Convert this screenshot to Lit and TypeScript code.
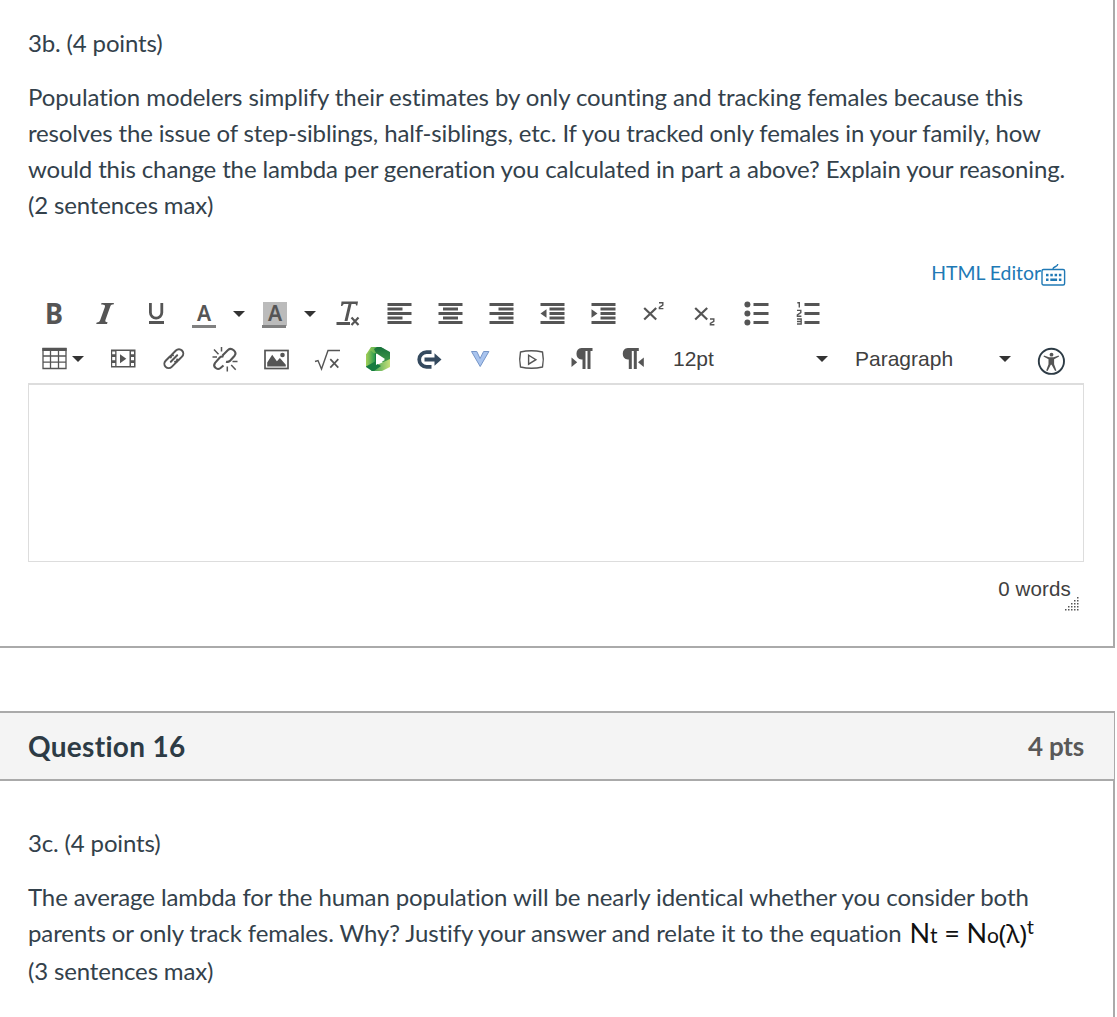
import { LitElement, html, svg, css } from "lit";
import { customElement, property } from "lit/decorators.js";

const caret = (x: number, y: number) =>
  svg`<path d="M${x} ${y}h12l-6 6z" fill="#333"/>`;

const bars = (rows: Array<[number, number]>) =>
  rows.map(([x, w], i) => svg`<rect x=${x} y=${7 + i * 4.5} width=${w} height="3"/>`);

const cross = (x: number, y: number, w: number, h: number, s: number) =>
  svg`<path d="M${x} ${y}l${w} ${h}M${x + w} ${y}l${-w} ${h}" fill="none" stroke="#555" stroke-width=${s}/>`;

const tinyTwo = (x: number, y: number) =>
  svg`<path d="M${x} ${y}h3.800v2.300l-3.400 2.200v1.300h4" fill="none" stroke="#555" stroke-width="1.400"/>`;

const pilcrow = (x: number) => svg`
  <path d="M${x + 17} 6v3h-2v18h-3V9h-2v18h-3V17.5h-1a5.8 5.8 0 0 1 0-11.5z"/>`;

const icons: Record<string, unknown> = {
  bold: svg`<text x="9" y="27.800" font-family="Noto Sans, sans-serif" font-weight="700" font-size="28.500" textLength="18" lengthAdjust="spacingAndGlyphs">B</text>`,
  italic: svg`<path d="M14.500 7H27l-.5 1.600c-2.300 0-2.700.5-3.500 2.600l-4.400 12.300c-.7 2-.4 2.600 2 2.800L20 28H9.200l.5-1.600c2.300 0 2.900-.6 3.600-2.600l4.500-12.500c.7-2 .3-2.600-3.700-2.800z"/>`,
  underline: svg`<path d="M12.400 7v9.500a5.700 5.700 0 0 0 11.400 0V7" fill="none" stroke="#555" stroke-width="2.800"/><rect x="11" y="25" width="15" height="3"/>`,
  textColor: svg`<text x="15" y="25" text-anchor="middle" font-family="Noto Sans, sans-serif" font-weight="600" font-size="21">A</text><rect x="3" y="29" width="24" height="3" fill="#808080"/>${caret(44, 15)}`,
  backColor: svg`<rect x="4" y="6" width="24" height="24" fill="#bbb"/><text x="16" y="25" text-anchor="middle" font-family="Noto Sans, sans-serif" font-weight="600" font-size="21">A</text><rect x="3" y="29" width="24" height="3" fill="#808080"/>${caret(45, 15)}`,
  clear: svg`<path d="M11.500 5.500H28l-.7 4h-1.300l-.3-1.500h-4.200l-4 17h-3l4-17h-4.700l-1.600 2h-1.200z"/><rect x="6.500" y="26" width="13.500" height="3"/>${cross(21.5, 21.5, 7, 7.5, 2.2)}`,
  left: svg`${bars([[6.5, 24], [6.5, 15], [6.5, 24], [6.5, 15], [6.5, 24]])}`,
  center: svg`${bars([[6.5, 24], [11, 15], [6.5, 24], [11, 15], [6.5, 24]])}`,
  right: svg`${bars([[6.5, 24], [15.5, 15], [6.5, 24], [15.5, 15], [6.5, 24]])}`,
  outdent: svg`${bars([[6.5, 24], [15.5, 15], [15.5, 15], [15.5, 15], [6.5, 24]])}<path d="M6.500 17.500l6-4.200v8.400z"/>`,
  indent: svg`${bars([[6.5, 24], [15.5, 15], [15.5, 15], [15.5, 15], [6.5, 24]])}<path d="M12.500 17.500l-6-4.200v8.400z"/>`,
  sup: svg`${cross(8.2, 12, 12, 11.5, 2.2)}${tinyTwo(23, 6.8)}`,
  sub: svg`${cross(8.2, 12, 12, 11.5, 2.2)}${tinyTwo(23, 23)}`,
  bullets: svg`${[8.5, 17.5, 26.5].map((y) => svg`<circle cx="9.400" cy=${y} r="3"/><rect x="15.500" y=${y - 1.5} width="15" height="3"/>`)}`,
  numbers: svg`${[8.5, 17.5, 26.5].map((y) => svg`<rect x="15.500" y=${y - 1.5} width="15" height="3"/>`)}
    <path d="M8.300 6.700h2V11.500" fill="none" stroke="#555" stroke-width="1.400"/>${tinyTwo(8, 14.4)}
    <path d="M8 23h4.200v5H8m0-2.500h4" fill="none" stroke="#555" stroke-width="1.300"/>`,
  table: svg`<path d="M7 6.500h23v20H7zM14.500 8v18.500M22.500 8v18.500M7 14h23M7 20.200h23" fill="none" stroke="#555" stroke-width="1.300"/><rect x="6.400" y="6" width="24.200" height="3"/>${caret(36, 14)}`,
  media: svg`<path fill-rule="evenodd" d="M6 7.500h24.500v18H6zM11.500 9v15h13V9zM7.200 9.500v2.700h3V9.500zM7.200 15v3.200h3V15zM7.200 21v3h3v-3zM26 9.500v2.700h3V9.500zM26 15v3.200h3V15zM26 21v3h3v-3z"/><path d="M15 12.200v9l6.300-4.500z"/>`,
  link: svg`<g fill="none" stroke="#555" stroke-width="2" stroke-linecap="round" transform="rotate(-45 18 16.500)">
    <path d="M16.500 19.500q1 1.300 3 1.300h5.500a4.300 4.300 0 0 0 4.300-4.300a4.300 4.300 0 0 0-4.300-4.300h-5.500q-2 0-3 1.300"/>
    <path d="M19.500 19.500q-1 1.300-3 1.300H10.500a4.300 4.300 0 0 1-4.300-4.300a4.300 4.300 0 0 1 4.300-4.300h6q2 0 3 1.300" /><path d="M13.500 16.500h9"/></g>`,
  unlink: svg`<g fill="none" stroke="#555" stroke-width="2.100">
    <path d="M15.500 13.500l5.500-5.500c3.500-3.200 9.500 2 6.600 5.700l-4.700 5.200c-1.200 1-2.400 1.200-3.900.8M16.500 23.500l-3 2.500c-3.500 2.700-8.200-1.500-5.400-5.200l4.700-5.300c1.100-1.100 2.200-1.300 3.700-.7"/>
    <path d="M7 7.500l4.500 4.700M14.500 5v4.500M5.500 15h4.500M25.500 19.500h5M24.200 23l4.500 4.800M20.300 24.500v5" stroke-width="1.500"/></g>`,
  image: svg`<rect x="7" y="8.500" width="23" height="18" fill="none" stroke="#555" stroke-width="1.700"/><path d="M9.200 24.400v-4l5-7.600 4.700 6.500 3-3.300 5.900 6.800v1.600z"/><circle cx="24.500" cy="13" r="2.300"/>`,
  equation: svg`<path d="M6 19.500l3-1 3.500 8.500L19 8.500h12" fill="none" stroke="#555" stroke-width="1.400"/>${cross(21.3, 17.2, 8, 8.4, 1.7)}`,
  studio: svg`<defs>
      <linearGradient id="ga"><stop offset="0" stop-color="#a5cf58"/><stop offset="1" stop-color="#279a4e"/></linearGradient>
      <linearGradient id="gb" x1="0" y1="0" x2="0" y2="1"><stop offset="0" stop-color="#17713b"/><stop offset="1" stop-color="#4fa84f"/></linearGradient>
      <linearGradient id="gc"><stop offset="0" stop-color="#2f9b50"/><stop offset="1" stop-color="#c5df78"/></linearGradient>
    </defs>
    <path d="M11 5h9l4 2-8 5v6L6 23V12.500z" fill="url(#ga)"/>
    <path d="M17 5h4l9 5v13l-5 3-3-7 3-2-9-6-2-4z" fill="url(#gb)"/>
    <path d="M11 28.500l8-6.500 11-5v8l-8 4H12z" fill="url(#gc)"/>
    <path d="M6 15l10-4v10l5 3-7 5h-2L6 25z" fill="#167c40"/>
    <path d="M6 12.500l5-4 4 4v7l-9 5z" fill="url(#ga)"/>
    <path d="M16 12.500v10.500l8.800-5z" fill="#fff"/>`,
  embed: svg`<path d="M20.500 10.200h-5a7.300 7.300 0 0 0 0 14.600h5" fill="none" stroke="#34495e" stroke-width="3.700"/><path d="M13.500 15.500h10v-4.300l7 6.300-7 6.300v-4.300h-10z" fill="#34495e"/>`,
  vue: svg`<path d="M9.500 9.500h5.300l3.300 7 3.500-7h5.300l-8.700 15z" fill="#a9c4ee" stroke="#7696c8" stroke-width="1"/>`,
  video: svg`<path d="M7.500 10q10.500-2.500 22 0 1.600 7.500 0 15-11 2.500-22 0-1.600-7.500 0-15z" fill="none" stroke="#555" stroke-width="1.400"/><path d="M15.600 13.200v9l7.300-4.500z" fill="none" stroke="#555" stroke-width="1.400"/>`,
  ltr: svg`${pilcrow(11.5)}<path d="M7.500 15.500v9.500l5.700-4.700z"/>`,
  rtl: svg`${pilcrow(6.8)}<path d="M28.800 15.500v9.500L23 20.200z"/>`,
  access: svg`<circle cx="18.400" cy="19.300" r="12.600" fill="none" stroke="#2d3b45" stroke-width="1.900"/><circle cx="18.500" cy="12.700" r="1.900"/><path d="M11 13.400l5 1.900h4.600l5-1.900.5 1-5 2.800v5l2.300 6.300-1.300.5-3.500-6.300h-.8l-3.200 6.300-1.400-.5 2.300-6.300v-5l-5-2.800z"/>`,
  keyboard: svg`<g fill="none" stroke="#2079b5" stroke-width="1.400"><rect x="1" y="6.500" width="22.600" height="15.500" rx="1.500"/><path d="M12 6c0-3 4.500-1.500 4.800-5"/></g>
    <g fill="#2079b5">${[5, 9.3, 13.6, 17.9].map((x) => svg`<rect x=${x} y="10.800" width="2.500" height="2.500"/>`)}<rect x="5" y="15.500" width="2.500" height="2.500"/><rect x="9.300" y="15.500" width="6.800" height="2.500"/><rect x="17.900" y="15.500" width="2.500" height="2.500"/></g>`,
};

@customElement("tool-icon")
class ToolIcon extends LitElement {
  @property() name = "";
  @property({ type: Number }) w = 36;
  @property({ type: Number }) h = 36;
  static styles = css`
    :host { display: block; flex: none; }
    svg { display: block; overflow: visible; fill: #555; }
  `;
  render() {
    return html`<svg width=${this.w} height=${this.h} viewBox="0 0 ${this.w} ${this.h}">${icons[this.name]}</svg>`;
  }
}

@customElement("rich-editor")
class RichEditor extends LitElement {
  static styles = css`
    :host { display: block; letter-spacing: 0; }
    .switch { display: flex; justify-content: flex-end; align-items: center; height: 26px; margin-right: 18px; color: #2079b5; font-size: 19.4px; }
    .switch tool-icon { margin-top: 3px; }
    .row { display: flex; gap: 15px; padding-left: 8px; height: 36px; }
    .row.first { margin: 10px 0 10px; }
    .select { display: flex; align-items: center; justify-content: space-between; height: 34px; font: 21px "Liberation Sans", sans-serif; color: #404040; }
    .size { width: 155px; margin-left: 7px; }
    .format { width: 156px; margin-left: 12px; }
    .arrow { border: 6px solid transparent; border-top-color: #333; border-bottom: 0; }
    .access { margin-left: 7px; }
    .area { box-sizing: border-box; height: 179px; margin-top: 5px; border: 1px solid #ddd; border-top-width: 2px; }
    .status { display: flex; justify-content: flex-end; align-items: flex-start; padding: 14px 5px 0 0; height: 84px; box-sizing: border-box; }
    .words { font: 20.5px/26px "Liberation Sans", sans-serif; color: #404040; letter-spacing: 0.15px; }
    .grip { display: block; margin: 21px 0 0 -6px; }
  `;
  render() {
    const first: Array<[string, number]> = [["bold", 36], ["italic", 36], ["underline", 36], ["textColor", 55], ["backColor", 56],
      ["clear", 36], ["left", 36], ["center", 36], ["right", 36], ["outdent", 36], ["indent", 36], ["sup", 36], ["sub", 36], ["bullets", 36], ["numbers", 36]];
    const second: Array<[string, number]> = [["table", 54], ["media", 36], ["link", 36], ["unlink", 36], ["image", 36], ["equation", 36],
      ["studio", 36], ["embed", 36], ["vue", 36], ["video", 36], ["ltr", 36], ["rtl", 36]];
    const tool = ([name, w]: [string, number]) => html`<tool-icon .name=${name} .w=${w}></tool-icon>`;
    const dots = [0, 1, 2, 3, 4].flatMap((r) =>
      Array.from({ length: r + 1 }, (_, c) => svg`<rect x=${12 - c * 3} y=${r * 3} width="1.500" height="1.500"/>`));
    return html`
      <div class="switch"><span>HTML Editor</span><tool-icon .name=${"keyboard"} .w=${25} .h=${24}></tool-icon></div>
      <div class="row first">${first.map(tool)}</div>
      <div class="row">
        ${second.map(tool)}
        <div class="select size"><span>12pt</span><i class="arrow"></i></div>
        <div class="select format"><span>Paragraph</span><i class="arrow"></i></div>
        <tool-icon class="access" .name=${"access"}></tool-icon>
      </div>
      <div class="area"></div>
      <div class="status"><span class="words">0 words</span>
        <svg class="grip" width="14" height="14" fill="#555">${dots}</svg></div>
    `;
  }
}

@customElement("app-root")
class AppRoot extends LitElement {
  static styles = css`
    :host { display: block; height: 1017px; overflow: hidden; background: #fff; color: #2d3b45; font: 24px/36px Lato, sans-serif; font-variant-ligatures: none; }
    .question { width: 1115px; box-sizing: border-box; border-right: 2px solid #aaa; padding: 25px 29px 0 28px; letter-spacing: -0.15px; }
    .answered { height: 648px; border-bottom: 2px solid #aaa; }
    .open { height: 240px; padding-top: 44px; }
    p { margin: 0 0 18px; white-space: nowrap; color: #33414b; }
    rich-editor { margin-top: 37px; }
    .header { width: 1115px; height: 70px; margin-top: 63px; box-sizing: border-box; display: flex; justify-content: space-between; align-items: center;
      padding: 0 30px 0 28px; border: 2px solid #aaa; border-left: 0; border-right-width: 1px; background: #f4f4f4; font-weight: 700; }
    .name { font-size: 28px; letter-spacing: 0.3px; }
    .points { font-size: 26px; color: #595959; letter-spacing: -0.2px; }
    .line { display: block; }
    .loose { letter-spacing: -0.085px; }
    .medium { letter-spacing: -0.105px; }
    .snug { letter-spacing: -0.13px; }
    .tall { height: 38px; }
    .formula { color: #111; font-size: 27px; line-height: 30px; margin-left: 2px; letter-spacing: -0.15px; position: relative; top: 1px; }
    .low { font-size: 21px; }
    .high { font-size: 20px; position: relative; top: -9px; }
    .lambda { font-family: "Noto Sans", sans-serif; font-size: 25.5px; }
  `;
  render() {
    return html`
      <section class="question answered">
        <p>3b. (4 points)</p>
        <p>
          <span class="line loose">Population modelers simplify their estimates by only counting and tracking females because this</span>
          <span class="line">resolves the issue of step-siblings, half-siblings, etc. If you tracked only females in your family, how</span>
          <span class="line snug">would this change the lambda per generation you calculated in part a above? Explain your reasoning.</span>
          <span class="line">(2 sentences max)</span>
        </p>
        <rich-editor></rich-editor>
      </section>
      <header class="header"><span class="name">Question 16</span><span class="points">4 pts</span></header>
      <section class="question open">
        <p>3c. (4 points)</p>
        <p>
          <span class="line medium">The average lambda for the human population will be nearly identical whether you consider both</span>
          <span class="line tall medium">parents or only track females. Why? Justify your answer and relate it to the equation <span class="formula">N<span class="low">t</span> = N<span class="low">o</span><span class="lambda">(λ)</span><span class="high">t</span></span></span>
          <span class="line">(3 sentences max)</span>
        </p>
      </section>
    `;
  }
}
